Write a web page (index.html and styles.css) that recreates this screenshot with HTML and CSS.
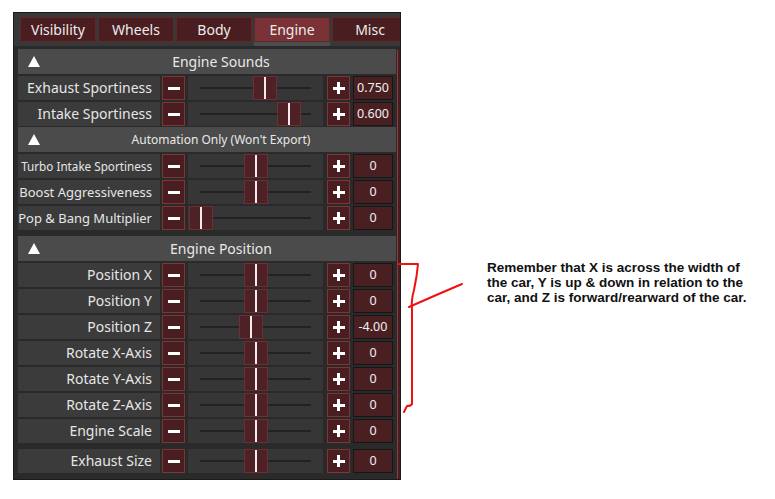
FILE: index.html
```html
<!DOCTYPE html>
<html lang="en">
<head>
    <meta charset="UTF-8">
    <title>Engine Settings</title>
    <link rel="stylesheet" href="styles.css">
</head>
<body>
<div class="page">

    <div class="panel">
        <div class="tabs">
            <div class="tab">Visibility</div>
            <div class="tab">Wheels</div>
            <div class="tab">Body</div>
            <div class="tab active">Engine</div>
            <div class="tab">Misc</div>
        </div>

        <div class="main">
            <div class="list">

                <div class="section">
                    <div class="head"><span class="arrow"></span><span class="title">Engine Sounds</span></div>
                    <div class="row">
                        <div class="label">Exhaust Sportiness</div>
                        <div class="btn minus"></div>
                        <div class="slider"><div class="thumb" style="left: 65px"></div></div>
                        <div class="btn plus"></div>
                        <div class="value">0.750</div>
                    </div>
                    <div class="row">
                        <div class="label">Intake Sportiness</div>
                        <div class="btn minus"></div>
                        <div class="slider"><div class="thumb" style="left: 89px"></div></div>
                        <div class="btn plus"></div>
                        <div class="value">0.600</div>
                    </div>
                </div>

                <div class="section">
                    <div class="head small"><span class="arrow"></span><span class="title">Automation Only (Won't Export)</span></div>
                    <div class="row">
                        <div class="label tighter">Turbo Intake Sportiness</div>
                        <div class="btn minus"></div>
                        <div class="slider"><div class="thumb" style="left: 56px"></div></div>
                        <div class="btn plus"></div>
                        <div class="value">0</div>
                    </div>
                    <div class="row">
                        <div class="label tight">Boost Aggressiveness</div>
                        <div class="btn minus"></div>
                        <div class="slider"><div class="thumb" style="left: 56px"></div></div>
                        <div class="btn plus"></div>
                        <div class="value">0</div>
                    </div>
                    <div class="row">
                        <div class="label tight">Pop &amp; Bang Multiplier</div>
                        <div class="btn minus"></div>
                        <div class="slider"><div class="thumb" style="left: 1px"></div></div>
                        <div class="btn plus"></div>
                        <div class="value">0</div>
                    </div>
                </div>

                <div class="section spaced">
                    <div class="head"><span class="arrow"></span><span class="title">Engine Position</span></div>
                    <div class="row">
                        <div class="label">Position X</div>
                        <div class="btn minus"></div>
                        <div class="slider"><div class="thumb" style="left: 56px"></div></div>
                        <div class="btn plus"></div>
                        <div class="value">0</div>
                    </div>
                    <div class="row">
                        <div class="label">Position Y</div>
                        <div class="btn minus"></div>
                        <div class="slider"><div class="thumb" style="left: 56px"></div></div>
                        <div class="btn plus"></div>
                        <div class="value">0</div>
                    </div>
                    <div class="row">
                        <div class="label">Position Z</div>
                        <div class="btn minus"></div>
                        <div class="slider"><div class="thumb" style="left: 51px"></div></div>
                        <div class="btn plus"></div>
                        <div class="value">-4.00</div>
                    </div>
                    <div class="row">
                        <div class="label">Rotate X-Axis</div>
                        <div class="btn minus"></div>
                        <div class="slider"><div class="thumb" style="left: 56px"></div></div>
                        <div class="btn plus"></div>
                        <div class="value">0</div>
                    </div>
                    <div class="row">
                        <div class="label">Rotate Y-Axis</div>
                        <div class="btn minus"></div>
                        <div class="slider"><div class="thumb" style="left: 56px"></div></div>
                        <div class="btn plus"></div>
                        <div class="value">0</div>
                    </div>
                    <div class="row">
                        <div class="label">Rotate Z-Axis</div>
                        <div class="btn minus"></div>
                        <div class="slider"><div class="thumb" style="left: 56px"></div></div>
                        <div class="btn plus"></div>
                        <div class="value">0</div>
                    </div>
                    <div class="row">
                        <div class="label">Engine Scale</div>
                        <div class="btn minus"></div>
                        <div class="slider"><div class="thumb" style="left: 56px"></div></div>
                        <div class="btn plus"></div>
                        <div class="value">0</div>
                    </div>
                    <div class="row apart">
                        <div class="label">Exhaust Size</div>
                        <div class="btn minus"></div>
                        <div class="slider"><div class="thumb" style="left: 56px"></div></div>
                        <div class="btn plus"></div>
                        <div class="value">0</div>
                    </div>
                </div>

            </div>
            <div class="scroll"></div>
        </div>
    </div>

    <div class="note">
        Remember that X is across the width of<br>
        the car, Y is up &amp; down in relation to the<br>
        car, and Z is forward/rearward of the car.
    </div>

    <!-- hand drawn bracket next to the position rows -->
    <svg class="scribble" width="775" height="499" viewBox="0 0 775 499">
        <path d="M398 264 L418 264 Q417 276 414 290 Q411 300 412 310 L412 404 Q411 406 407 406 L404 412"
              fill="none" stroke="#f01010" stroke-width="2" stroke-linejoin="round" stroke-linecap="round"/>
        <path d="M409 307 Q436 295 462 284"
              fill="none" stroke="#f01010" stroke-width="2" stroke-linecap="round"/>
    </svg>

</div>
</body>
</html>
```

FILE: styles.css
```css
* {
    box-sizing: border-box;
}

body {
    margin: 0;
    background: #fff;
    font-family: "Noto Sans", sans-serif;
}

.page {
    position: relative;
    display: flex;
    align-items: flex-start;
}

/* settings window */
.panel {
    margin: 12px 0 0 13px;
    width: 388px;
    height: 468px;
    border: 1px solid #1b1b1b;
    background: #2a2a2a;
    display: flex;
    flex-direction: column;
    overflow: hidden;
}

.tabs {
    display: flex;
    gap: 2px;
    height: 33px;
    padding: 4px 0 4px 6px;
    background: #383838;
}

.tab {
    flex: 0 0 76px;
    height: 25px;
    background: #4a1d20;
    border: 1px solid #5c2a2d;
    color: #ececec;
    font-size: 14px;
    line-height: 23px;
    text-align: center;
}

.tab.active {
    background: #7b3236;
    box-shadow: 0 4px 0 #4d4d4d;
}

.main {
    flex: 1;
    display: flex;
    gap: 1px;
    padding: 3px 0 0 4px;
}

.list {
    width: 378px;
}

.scroll {
    width: 3px;
    margin-top: 1px;
    background: #4a1d20;
    border-left: 1px solid #8a3c3f;
}

.section + .section {
    margin-top: 1px;
}

.section.spaced {
    margin-top: 6px;
}

.head {
    height: 25px;
    display: flex;
    align-items: center;
    background: #4b4b4b;
    color: #e8e8e8;
    font-size: 14px;
}

.head.small .title {
    font-size: 12px;
}

.arrow {
    flex: 0 0 28px;
    height: 11px;
    position: relative;
}

.arrow::before {
    content: "";
    position: absolute;
    left: 10px;
    top: 0;
    border-left: 6px solid transparent;
    border-right: 6px solid transparent;
    border-bottom: 11px solid #fff;
}

.title {
    flex: 1;
    text-align: center;
}

.row {
    display: flex;
    height: 24px;
    margin-top: 2px;
}

.row.apart {
    margin-top: 6px;
}

.label {
    width: 142px;
    padding-right: 8px;
    background: #3b3b3b;
    color: #e6e6e6;
    font-size: 14px;
    line-height: 24px;
    text-align: right;
    white-space: nowrap;
}

.label.tight {
    font-size: 13px;
}

.label.tighter {
    font-size: 11.7px;
}

.btn {
    width: 23px;
    margin-left: 2px;
    border: 1px solid #7a3639;
    background-color: #4a1e21;
}

.minus {
    background: linear-gradient(#fff, #fff) center / 12px 3px no-repeat, #4a1e21;
}

.plus {
    margin-left: 4px;
    background: linear-gradient(#fff, #fff) center / 12px 3px no-repeat,
                linear-gradient(#fff, #fff) center / 3px 12px no-repeat,
                #4a1e21;
}

.slider {
    width: 135px;
    margin-left: 3px;
    position: relative;
    background: linear-gradient(#222, #222) 12px 50% / 111px 2px no-repeat, #363636;
}

.thumb {
    position: absolute;
    top: 0;
    bottom: 0;
    width: 24px;
    border: 1px solid #6d2f33;
    background: linear-gradient(#f6eaea, #f6eaea) center / 2px 100% no-repeat, #4d2125;
}

.value {
    width: 40px;
    margin-left: 3px;
    background: #4a1f22;
    border: 1px solid #161616;
    color: #f0f0f0;
    font-size: 12.5px;
    line-height: 22px;
    text-align: center;
}

/* side note */
.note {
    margin: 260px 0 0 86px;
    font-family: "Liberation Sans", Arial, sans-serif;
    font-weight: bold;
    font-size: 13.5px;
    line-height: 15px;
    color: #111;
    white-space: nowrap;
}

.scribble {
    position: absolute;
    left: 0;
    top: 0;
    pointer-events: none;
}
```
